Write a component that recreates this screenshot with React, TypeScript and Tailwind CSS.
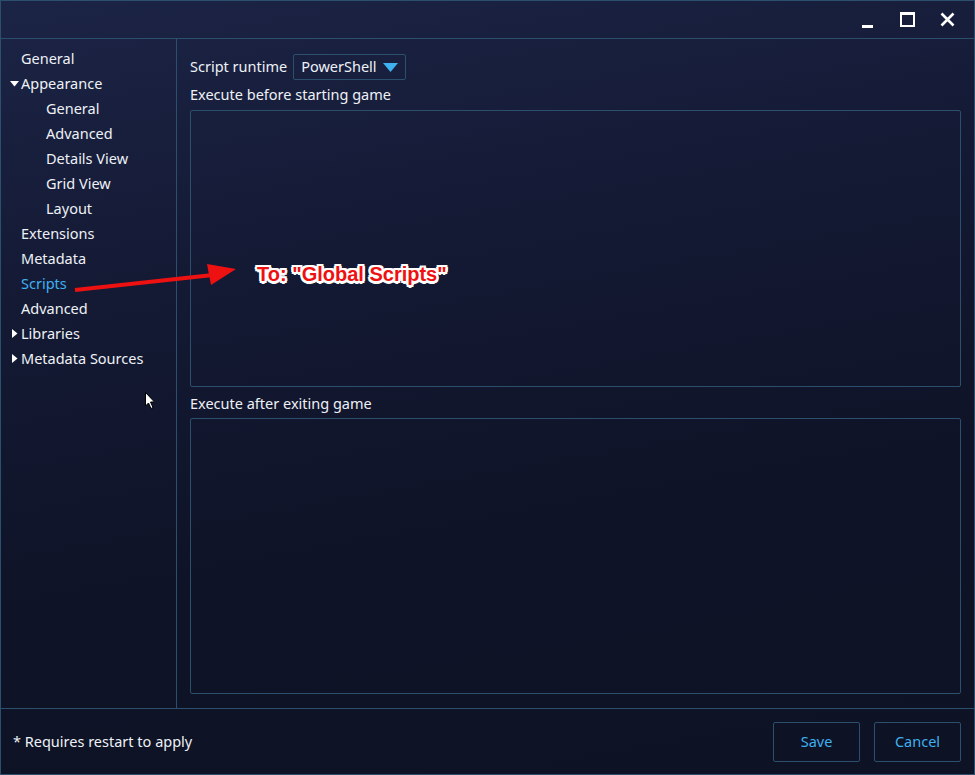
import React from "react";

const navItems: { label: string; indent: number; arrow?: "down" | "right"; active?: boolean }[] = [
  { label: "General", indent: 0 },
  { label: "Appearance", indent: 0, arrow: "down" },
  { label: "General", indent: 1 },
  { label: "Advanced", indent: 1 },
  { label: "Details View", indent: 1 },
  { label: "Grid View", indent: 1 },
  { label: "Layout", indent: 1 },
  { label: "Extensions", indent: 0 },
  { label: "Metadata", indent: 0 },
  { label: "Scripts", indent: 0, active: true },
  { label: "Advanced", indent: 0 },
  { label: "Libraries", indent: 0, arrow: "right" },
  { label: "Metadata Sources", indent: 0, arrow: "right" },
];

export default function App() {
  return (
    <div
      className="relative w-[975px] h-[775px] overflow-hidden border border-[#2c4f6d] bg-[linear-gradient(170deg,#1c2446_0%,#141a34_32%,#0e1327_65%,#0d1224_100%)] text-[#eef1f6] text-[14.5px]"
      style={{ fontFamily: '"Noto Sans", "Open Sans", sans-serif' }}
    >
      <div className="flex flex-col h-full">
        {/* Title bar */}
        <div className="h-[38px] flex items-center justify-end border-b border-[#2c4f6d] pr-[7px]">
          <div className="w-[40px] h-[38px] flex items-center justify-center">
            <div className="w-[11px] h-[3px] bg-white mt-[14px]" />
          </div>
          <div className="w-[40px] h-[38px] flex items-center justify-center">
            <div className="w-[15px] h-[15px] border-2 border-white border-t-[3px]" />
          </div>
          <div className="w-[40px] h-[38px] flex items-center justify-center">
            <svg width="15" height="15" viewBox="0 0 15 15">
              <path d="M1.5 1.5 L13.5 13.5 M13.5 1.5 L1.5 13.5" stroke="white" strokeWidth="2.6" />
            </svg>
          </div>
        </div>
        {/* Body */}
        <div className="flex flex-1 min-h-0">
          {/* Sidebar */}
          <div className="w-[176px] border-r border-[#2c4f6d] pt-[7px] flex flex-col">
            {navItems.map((it, i) => (
              <div
                key={i}
                className={`h-[25px] flex items-center ${it.indent ? "pl-[45px]" : "pl-[20px]"} relative ${
                  it.active ? "text-[#3fb0f0]" : ""
                }`}
              >
                {it.arrow === "down" && (
                  <svg className="absolute left-[9px] top-[10px]" width="9" height="6" viewBox="0 0 9 6">
                    <path d="M0 0 L9 0 L4.5 5.5 Z" fill="white" />
                  </svg>
                )}
                {it.arrow === "right" && (
                  <svg className="absolute left-[11px] top-[8px]" width="6" height="9" viewBox="0 0 6 9">
                    <path d="M0 0 L5.5 4.5 L0 9 Z" fill="white" />
                  </svg>
                )}
                {it.label}
              </div>
            ))}
          </div>
          {/* Content */}
          <div className="flex-1 pl-[13px] pr-[13px] pt-[15px] pb-[14px] flex flex-col">
            <div className="flex items-center gap-[6px] h-[26px]">
              <span>Script runtime</span>
              <div className="h-[26px] w-[113px] border border-[#2c4f6d] rounded-[2px] flex items-center pl-[7px] gap-[6px]">
                <span>PowerShell</span>
                <svg width="15" height="9" viewBox="0 0 15 9">
                  <path d="M0 0 L15 0 L7.5 9 Z" fill="#3fb0f0" />
                </svg>
              </div>
            </div>
            <div className="mt-[2px] h-[26px] flex items-center">Execute before starting game</div>
            <div className="mt-[2px] h-[277px] border border-[#2c4f6d] rounded-[2px]" />
            <div className="mt-[4px] h-[26px] flex items-center">Execute after exiting game</div>
            <div className="mt-[1px] flex-1 border border-[#2c4f6d] rounded-[2px]" />
          </div>
        </div>
        {/* Footer */}
        <div className="h-[66px] border-t border-[#2c4f6d] flex items-center pl-[12px] pr-[13px]">
          <span className="flex-1">* Requires restart to apply</span>
          <div className="flex gap-[14px]">
            <div className="w-[87px] h-[40px] border border-[#2c4f6d] rounded-[2px] flex items-center justify-center text-[#3fb0f0]">
              Save
            </div>
            <div className="w-[87px] h-[40px] border border-[#2c4f6d] rounded-[2px] flex items-center justify-center text-[#3fb0f0]">
              Cancel
            </div>
          </div>
        </div>
      </div>

      {/* Annotation arrow */}
      <svg className="absolute left-0 top-0 pointer-events-none" width="975" height="775">
        <line x1="74" y1="289" x2="212" y2="274" stroke="#ee1111" strokeWidth="4" />
        <polygon points="206,263 235,268 210,284" fill="#ee1111" />
        {/* mouse cursor */}
        <path d="M144.5 391.5 L144.5 405 L147.5 402 L150 407.5 L152 406.5 L149.5 401 L153.5 401 Z" fill="white" stroke="black" strokeWidth="1" />
      </svg>
      <div
        className="absolute left-[256px] top-[258px] text-[20px] font-bold text-[#ee1111]"
        style={{
          fontFamily: '"Liberation Sans", Arial, sans-serif',
          textShadow:
            "2.5px 0 0 #fff, -2.5px 0 0 #fff, 0 2.5px 0 #fff, 0 -2.5px 0 #fff, 2px 2px 0 #fff, -2px -2px 0 #fff, 2px -2px 0 #fff, -2px 2px 0 #fff",
        }}
      >
        To: "Global Scripts"
      </div>
    </div>
  );
}
